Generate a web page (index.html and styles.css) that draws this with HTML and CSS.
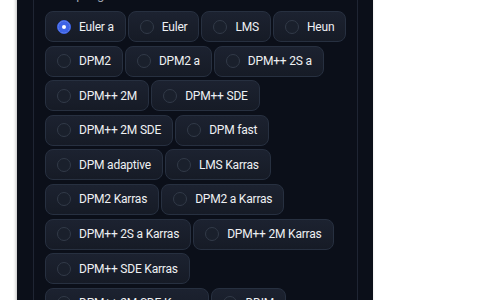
FILE: index.html
```html
<!DOCTYPE html>
<html lang="en">
<head>
    <meta charset="UTF-8">
    <meta name="viewport" content="width=device-width, initial-scale=1.0">
    <title>Sampling method</title>
    <link rel="stylesheet" href="styles.css">
</head>
<body>

<div class="panel">
    <div class="block">
        <span class="block-label">Sampling method</span>
        <div class="options">
            <label class="option selected"><span class="dot"></span>Euler a</label>
            <label class="option"><span class="dot"></span>Euler</label>
            <label class="option"><span class="dot"></span>LMS</label>
            <label class="option"><span class="dot"></span>Heun</label>
            <label class="option"><span class="dot"></span>DPM2</label>
            <label class="option"><span class="dot"></span>DPM2 a</label>
            <label class="option"><span class="dot"></span>DPM++ 2S a</label>
            <label class="option"><span class="dot"></span>DPM++ 2M</label>
            <label class="option"><span class="dot"></span>DPM++ SDE</label>
            <label class="option"><span class="dot"></span>DPM++ 2M SDE</label>
            <label class="option"><span class="dot"></span>DPM fast</label>
            <label class="option"><span class="dot"></span>DPM adaptive</label>
            <label class="option"><span class="dot"></span>LMS Karras</label>
            <label class="option"><span class="dot"></span>DPM2 Karras</label>
            <label class="option"><span class="dot"></span>DPM2 a Karras</label>
            <label class="option"><span class="dot"></span>DPM++ 2S a Karras</label>
            <label class="option"><span class="dot"></span>DPM++ 2M Karras</label>
            <label class="option"><span class="dot"></span>DPM++ SDE Karras</label>
            <label class="option"><span class="dot"></span>DPM++ 2M SDE Karras</label>
            <label class="option"><span class="dot"></span>DDIM</label>
        </div>
    </div>
</div>

</body>
</html>
```
FILE: styles.css
```css
*{
    padding: 0;
    margin: 0;
    box-sizing: border-box;
}

body{
    background-color: #fff;
    font-family: Roboto, "Noto Sans", sans-serif;
    height: 300px;
    overflow: hidden;
}

.panel
{
    width: 356px;
    margin-left: 17px;
    min-height: 300px;
    background-color: #0b0f19;
    padding: 0 15px 0 16px;
    box-shadow: -1px 0 3px rgba(0, 0, 0, 0.25);
}

.block
{
    border-left: 1px solid #1f2533;
    border-right: 1px solid #1f2533;
    padding: 0 8px 0 11px;
    margin-top: -12px;
    min-height: 320px;
}

.block-label
{
    display: block;
    color: #9ca3af;
    font-size: 13px;
    line-height: 14px;
    padding-left: 5px;
    margin-bottom: 9px;
}

.options
{
    display: flex;
    flex-wrap: wrap;
    gap: 3.6px 2px;
}

.option
{
    display: flex;
    align-items: center;
    gap: 8px;
    height: 31px;
    padding: 0 11px;
    border: 1px solid #273040;
    border-radius: 8px;
    background: linear-gradient(to top, #161b26, #1c2230);
    color: #eef0f3;
    font-size: 12px;
    letter-spacing: -0.2px;
    white-space: nowrap;
}

.dot
{
    width: 14px;
    height: 14px;
    border-radius: 50%;
    border: 1px solid #323a48;
    background-color: #1a202c;
    flex-shrink: 0;
}

.option.selected .dot
{
    border-color: #3d63e6;
    background-color: #3d63e6;
    box-shadow: inset 0 0 0 4px #3d63e6, inset 0 0 0 7px #fff;
}
```
